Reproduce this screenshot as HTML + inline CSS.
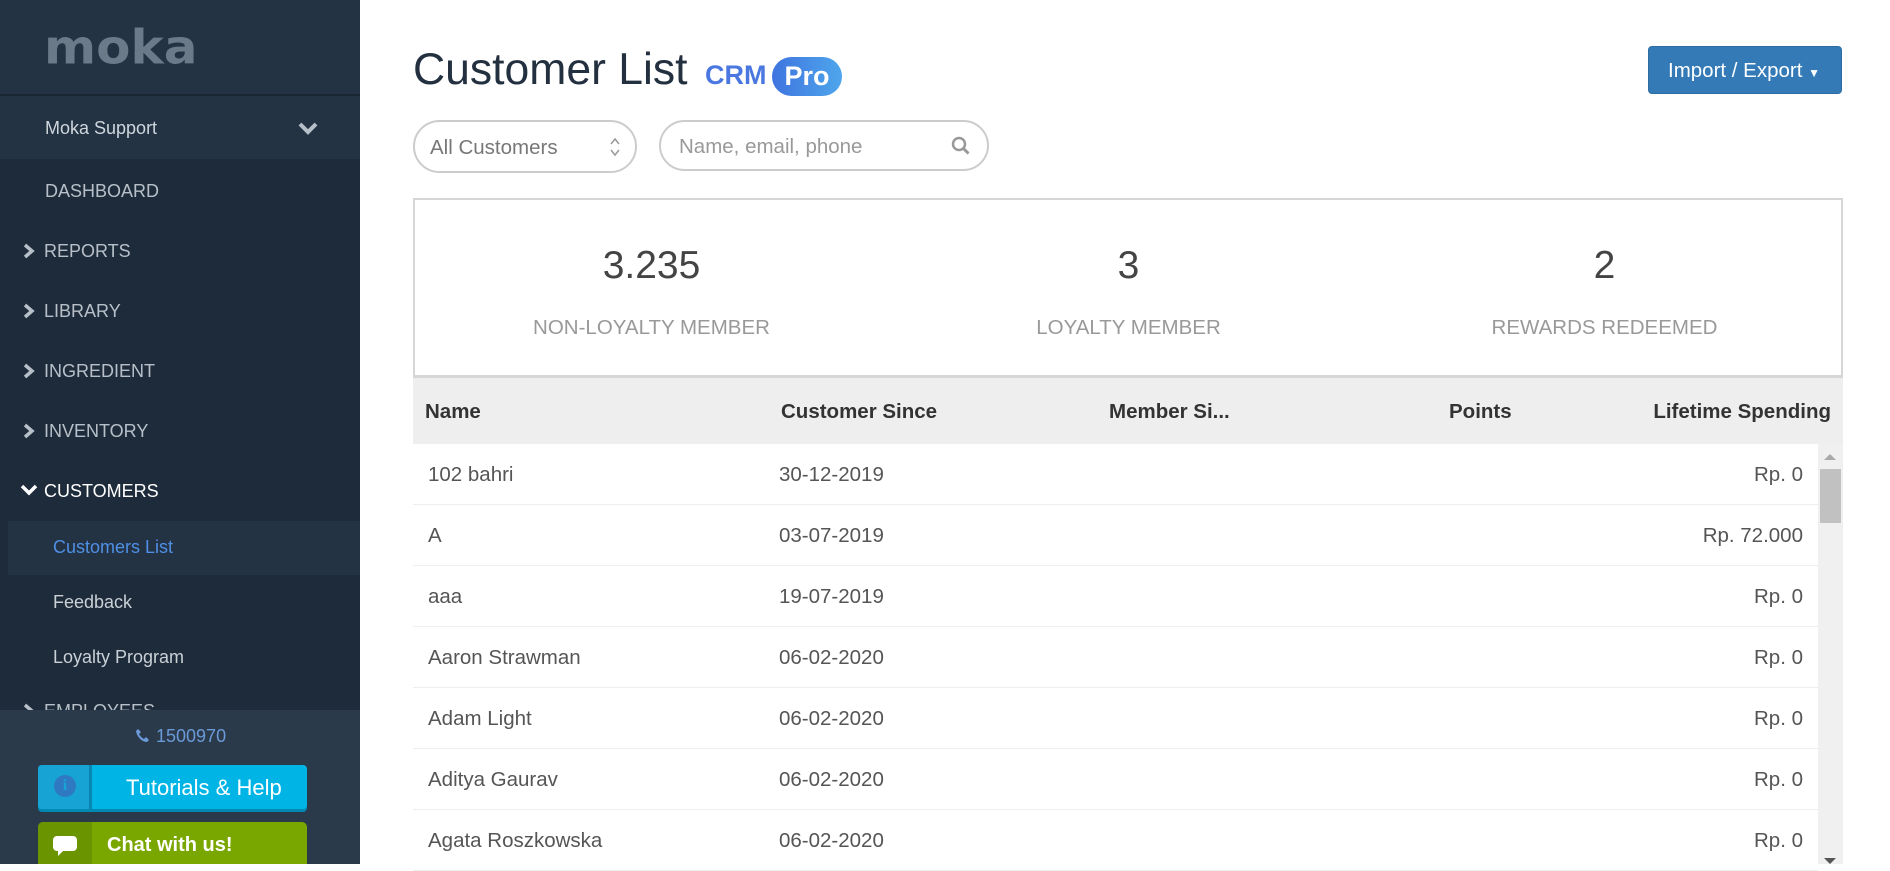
<!DOCTYPE html>
<html><head><meta charset="utf-8"><style>
*{box-sizing:border-box;margin:0;padding:0}
body{width:1890px;height:864px;overflow:hidden;font-family:"Liberation Sans",Arial,sans-serif;background:#fff;position:relative}
.sb{position:absolute;left:0;top:0;width:360px;height:864px;background:#1e2b3a;overflow:hidden}
.logo{height:96px;background:#243343;border-bottom:2px solid #1b2633;position:relative}
.logo span{position:absolute;left:44px;top:20px;font-size:50px;font-weight:bold;color:#6b7a88;letter-spacing:0px;font-family:"DejaVu Sans",sans-serif;transform:scale(1.0,0.95);transform-origin:left top}
.sup{height:63px;background:#243343;color:#cfd6dd;font-size:18px;padding:22px 0 0 45px;position:relative}
.item{position:absolute;left:0;color:#b7c0c9;font-size:18px}
.item .ar{position:absolute;left:22px;top:2px}
.sub{position:absolute;left:53px;color:#c9d0d6;font-size:18px}
.bot{position:absolute;left:0;top:710px;width:360px;height:154px;background:#2b3a4b}
.rowt{position:absolute;left:413px;width:1405px;height:61px;border-bottom:1px solid #eee;font-size:20.5px;color:#555}
.rowt span{position:absolute;top:19px}
.num{position:absolute;top:244px;width:477px;text-align:center;font-size:39px;color:#444}
.lab{position:absolute;top:316px;width:477px;text-align:center;font-size:20.5px;color:#999}
</style></head><body>
<div class="sb">
 <div class="logo"><span>moka</span></div>
 <div class="sup">Moka Support
  <svg style="position:absolute;left:298px;top:26px" width="20" height="13" viewBox="0 0 20 13"><path d="M2 2l8 8 8-8" stroke="#b7c0c9" stroke-width="4" fill="none"/></svg>
 </div>
 <div class="item" style="top:181px;left:45px">DASHBOARD</div>
 <div class="item" style="top:241px;width:360px"><svg class="ar" width="14" height="16" viewBox="0 0 14 16"><path d="M3 2l7 6-7 6" stroke="#b7c0c9" stroke-width="3.5" fill="none"/></svg><span style="margin-left:44px">REPORTS</span></div>
 <div class="item" style="top:301px;width:360px"><svg class="ar" width="14" height="16" viewBox="0 0 14 16"><path d="M3 2l7 6-7 6" stroke="#b7c0c9" stroke-width="3.5" fill="none"/></svg><span style="margin-left:44px">LIBRARY</span></div>
 <div class="item" style="top:361px;width:360px"><svg class="ar" width="14" height="16" viewBox="0 0 14 16"><path d="M3 2l7 6-7 6" stroke="#b7c0c9" stroke-width="3.5" fill="none"/></svg><span style="margin-left:44px">INGREDIENT</span></div>
 <div class="item" style="top:421px;width:360px"><svg class="ar" width="14" height="16" viewBox="0 0 14 16"><path d="M3 2l7 6-7 6" stroke="#b7c0c9" stroke-width="3.5" fill="none"/></svg><span style="margin-left:44px">INVENTORY</span></div>
 <div class="item" style="top:481px;width:360px;color:#fff"><svg style="position:absolute;left:20px;top:3px" width="18" height="13" viewBox="0 0 18 13"><path d="M2 2l7 7 7-7" stroke="#fff" stroke-width="3.5" fill="none"/></svg><span style="margin-left:44px">CUSTOMERS</span></div>
 <div style="position:absolute;left:8px;top:521px;width:352px;height:54px;background:#243343"></div>
 <div class="sub" style="top:537px;color:#4f8fe6">Customers List</div>
 <div class="sub" style="top:592px">Feedback</div>
 <div class="sub" style="top:647px">Loyalty Program</div>
 <div class="item" style="top:701px;width:360px"><svg class="ar" width="14" height="16" viewBox="0 0 14 16"><path d="M3 2l7 6-7 6" stroke="#b7c0c9" stroke-width="3.5" fill="none"/></svg><span style="margin-left:44px">EMPLOYEES</span></div>
 <div class="bot">
  <div style="position:absolute;left:135px;top:16px;color:#6a9ad8;font-size:18px"><svg width="16" height="16" viewBox="0 0 16 16" style="vertical-align:-2px"><path d="M3 1l3 3-2 2c1 2 3 4 5 5l2-2 3 3-2 2C7 14 2 9 1 3z" fill="#6a9ad8"/></svg> 1500970</div>
  <div style="position:absolute;left:38px;top:55px;width:269px;height:44px;background:#00b5e6;border-radius:4px;box-shadow:0 3px 0 #0089b3">
   <div style="position:absolute;left:0;top:0;width:54px;height:44px;background:#17a3d4;border-right:3px solid #0a86b5;border-radius:4px 0 0 4px"></div>
   <div style="position:absolute;left:16px;top:10px;width:22px;height:22px;border-radius:50%;background:#2f79c2;color:#17a3d4;font:bold 16px 'Liberation Serif',serif;text-align:center;line-height:22px">i</div>
   <div style="position:absolute;left:88px;top:10px;color:#fff;font-size:22px">Tutorials &amp; Help</div>
  </div>
  <div style="position:absolute;left:38px;top:112px;width:269px;height:50px;background:#7aa600;border-radius:5px 5px 0 0">
   <div style="position:absolute;left:0;top:0;width:54px;height:50px;background:#6a9400;border-radius:5px 0 0 0"></div>
   <svg style="position:absolute;left:14px;top:13px" width="26" height="24" viewBox="0 0 26 24"><path d="M5 1h16a4 4 0 0 1 4 4v7a4 4 0 0 1-4 4H11l-5 5v-5H5a4 4 0 0 1-4-4V5a4 4 0 0 1 4-4z" fill="#fff"/></svg>
   <div style="position:absolute;left:69px;top:12px;color:#fff;font-size:20px;font-weight:bold">Chat with us!</div>
  </div>
 </div>
</div>

<div style="position:absolute;left:413px;top:45px;font-size:44.5px;color:#23303f">Customer List</div>
<div style="position:absolute;left:705px;top:60px;font-size:27px;font-weight:bold;color:#4a78e0">CRM</div>
<div style="position:absolute;left:772px;top:57px;width:70px;height:39px;border-radius:20px;background:linear-gradient(90deg,#3f74df,#4ea6ec);color:#fff;font-size:27px;font-weight:bold;text-align:center;line-height:39px">Pro</div>
<div style="position:absolute;left:1648px;top:46px;width:194px;height:48px;background:#337ab7;border:1px solid #2e6da4;border-radius:4px;color:#fff;font-size:20.5px;line-height:48px;padding-left:19px">Import / Export <span style="font-size:12px">&#9660;</span></div>

<div style="position:absolute;left:413px;top:120px;width:224px;height:53px;border:2px solid #ccc;border-radius:27px;color:#777;font-size:20.5px;padding:14px 0 0 15px">All Customers
 <svg style="position:absolute;right:14px;top:14px" width="12" height="22" viewBox="0 0 12 22"><path d="M2 8l4-5 4 5M2 14l4 5 4-5" stroke="#999" stroke-width="1.5" fill="none"/></svg></div>
<div style="position:absolute;left:659px;top:120px;width:330px;height:51px;border:2px solid #ccc;border-radius:26px;color:#999;font-size:20.5px;padding:13px 0 0 18px">Name, email, phone
 <svg style="position:absolute;right:16px;top:14px" width="20" height="20" viewBox="0 0 20 20"><circle cx="8" cy="8" r="6" stroke="#999" stroke-width="2.5" fill="none"/><path d="M12.5 12.5l5 5" stroke="#999" stroke-width="3"/></svg></div>

<div style="position:absolute;left:413px;top:198px;width:1430px;height:180px;border:2px solid #d6d6d6;border-bottom-width:3px"></div>
<div class="num" style="left:413px">3.235</div>
<div class="num" style="left:890px">3</div>
<div class="num" style="left:1366px">2</div>
<div class="lab" style="left:413px">NON-LOYALTY MEMBER</div>
<div class="lab" style="left:890px">LOYALTY MEMBER</div>
<div class="lab" style="left:1366px">REWARDS REDEEMED</div>

<div style="position:absolute;left:413px;top:378px;width:1430px;height:66px;background:#eee;font-size:20.5px;font-weight:bold;color:#333">
 <span style="position:absolute;left:12px;top:22px">Name</span>
 <span style="position:absolute;left:368px;top:22px">Customer Since</span>
 <span style="position:absolute;left:696px;top:22px">Member Si...</span>
 <span style="position:absolute;left:1036px;top:22px">Points</span>
 <span style="position:absolute;right:12px;top:22px">Lifetime Spending</span>
</div>
<div style="position:absolute;left:1818px;top:444px;width:25px;height:420px;background:#f0f0f0">
 <div style="position:absolute;left:6px;top:10px;width:0;height:0;border:6px solid transparent;border-bottom-color:#aaa;border-top:0"></div>
 <div style="position:absolute;left:2px;top:25px;width:21px;height:54px;background:#c1c1c1"></div>
 <div style="position:absolute;left:6px;top:414px;width:0;height:0;border:6px solid transparent;border-top-color:#555;border-bottom:0"></div>
</div>

<div class="rowt" style="top:444px"><span style="left:15px">102 bahri</span><span style="left:366px">30-12-2019</span><span style="right:15px">Rp. 0</span></div>
<div class="rowt" style="top:505px"><span style="left:15px">A</span><span style="left:366px">03-07-2019</span><span style="right:15px">Rp. 72.000</span></div>
<div class="rowt" style="top:566px"><span style="left:15px">aaa</span><span style="left:366px">19-07-2019</span><span style="right:15px">Rp. 0</span></div>
<div class="rowt" style="top:627px"><span style="left:15px">Aaron Strawman</span><span style="left:366px">06-02-2020</span><span style="right:15px">Rp. 0</span></div>
<div class="rowt" style="top:688px"><span style="left:15px">Adam Light</span><span style="left:366px">06-02-2020</span><span style="right:15px">Rp. 0</span></div>
<div class="rowt" style="top:749px"><span style="left:15px">Aditya Gaurav</span><span style="left:366px">06-02-2020</span><span style="right:15px">Rp. 0</span></div>
<div class="rowt" style="top:810px"><span style="left:15px">Agata Roszkowska</span><span style="left:366px">06-02-2020</span><span style="right:15px">Rp. 0</span></div>
</body></html>
